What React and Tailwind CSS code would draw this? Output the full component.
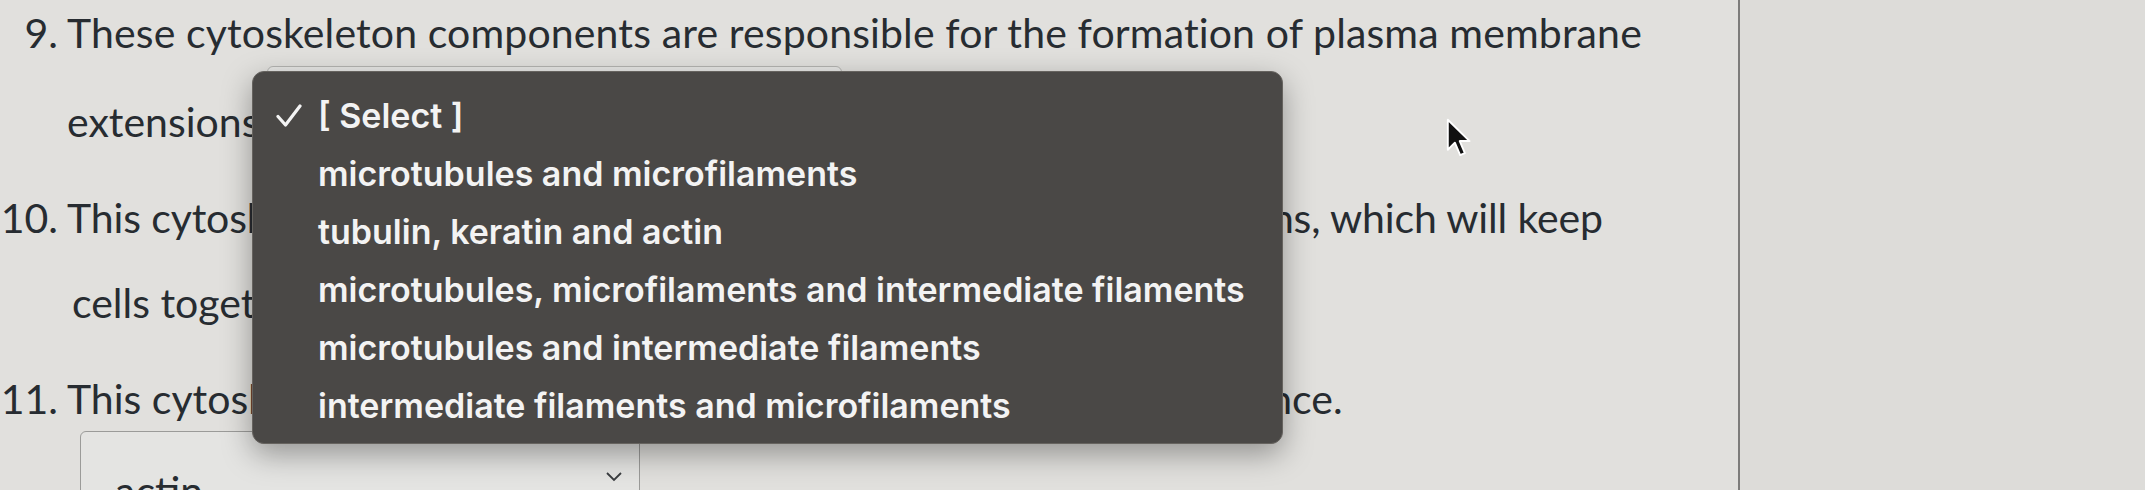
import React from 'react'

const options = [
  '[ Select ]',
  'microtubules and microfilaments',
  'tubulin, keratin and actin',
  'microtubules, microfilaments and intermediate filaments',
  'microtubules and intermediate filaments',
  'intermediate filaments and microfilaments',
]

function Num({ n }) {
  return <span className="w-[58px] shrink-0 text-right">{n}.</span>
}

function BlankSelect({ className }) {
  return <span className={'inline-block shrink-0 rounded-md border border-[#b4b4b1] bg-[#e7e7e5] ' + className} />
}

function Check() {
  return (
    <svg width="26" height="26" viewBox="0 0 26 26" fill="none">
      <path d="M2 13.5 L9.5 22 L24 3" stroke="#f4f4f4" strokeWidth="3.2" strokeLinecap="round" strokeLinejoin="round" />
    </svg>
  )
}

function Cursor() {
  return (
    <svg width="26" height="40" viewBox="0 0 22 34" className="absolute left-[1446px] top-[118px]">
      <path d="M1.5 1.5 L1.5 27 L7.5 21 L12 31.5 L16 29.8 L11.6 19.6 L20 19.6 Z" fill="#111" stroke="#fff" strokeWidth="1.6" strokeLinejoin="round" />
    </svg>
  )
}

function Dropdown() {
  return (
    <div className="absolute left-[252px] top-[71px] w-[1031px] h-[373px] rounded-[12px] border border-[#66635f] bg-[#4a4846] pt-[15px] shadow-[0_10px_30px_rgba(0,0,0,0.35)] font-['Inter','Liberation_Sans',sans-serif] font-semibold text-[34px] text-[#f3f3f3]">
      {options.map((o, i) => (
        <div key={o} className="flex h-[58px] items-center leading-[58px]">
          <span className="flex w-[65px] shrink-0 pl-[23px]">{i === 0 && <Check />}</span>
          <span className="whitespace-nowrap">{o}</span>
        </div>
      ))}
    </div>
  )
}

export default function App() {
  return (
    <div className="relative flex h-[490px] w-[2145px] overflow-hidden bg-[#dddcd9]">
      <div className="h-full w-[1740px] shrink-0 border-r-2 border-[#7d7c7a] bg-[#e1e0dd] font-['Lato','Liberation_Sans',sans-serif] text-[41px] text-[#272c31]">
        <div className="flex h-[65px] items-center leading-[48px] whitespace-nowrap">
          <Num n={9} />
          <span className="ml-[9px] tracking-[0.13px]">These cytoskeleton components are responsible for the formation of plasma membrane</span>
        </div>
        <div className="flex h-[113px] items-center pl-[67px] leading-[48px] whitespace-nowrap">
          <span>extensions</span>
          <BlankSelect className="ml-[8px] h-[111px] w-[575px]" />
        </div>

        <div className="flex h-[79px] items-center leading-[48px] whitespace-nowrap">
          <Num n={10} />
          <span className="ml-[9px] tracking-[-0.13px]">This cytoskeleton component is an important part of the cell junctions, which will keep</span>
        </div>
        <div className="flex h-[91px] items-center pl-[72px] leading-[48px] whitespace-nowrap">
          <span>cells together</span>
          <BlankSelect className="ml-[8px] h-[89px] w-[575px]" />
        </div>

        <div className="mt-[23px] flex h-[56px] items-center leading-[48px] whitespace-nowrap">
          <Num n={11} />
          <span className="ml-[9px]">This cytoskeleton component gives cells shape and provides resistance.</span>
        </div>
        <div className="mt-[4px] pl-[80px]">
          <div className="flex h-[100px] w-[560px] items-center justify-between rounded-md border border-[#9b9b99] bg-[#e4e4e2] pl-[34px] pr-[16px] leading-[48px]">
            <span className="pt-[20px]">actin</span>
            <svg width="18" height="12" viewBox="0 0 18 12" className="mt-[-8px]">
              <path d="M2 2 L9 9 L16 2" stroke="#3a3d40" strokeWidth="1.8" fill="none" />
            </svg>
          </div>
        </div>
      </div>
      <Dropdown />
      <Cursor />
    </div>
  )
}
